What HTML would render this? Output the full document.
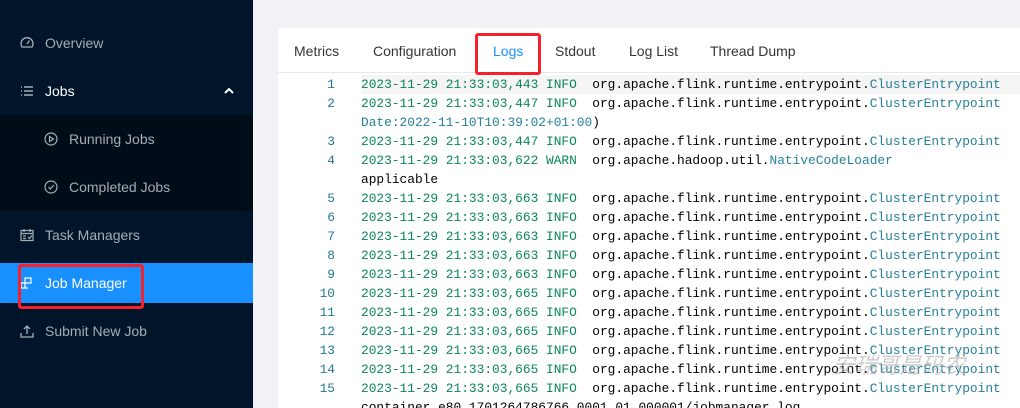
<!DOCTYPE html>
<html><head><meta charset="utf-8"><style>
*{margin:0;padding:0;box-sizing:border-box}
body{width:1020px;height:408px;overflow:hidden;background:#f0f2f5;font-family:"Liberation Sans",sans-serif;position:relative}
.sb{position:absolute;left:0;top:0;width:253px;height:408px;background:#001529}
.it{position:absolute;left:0;width:253px;height:40px;line-height:40px;color:#a6adb4;font-size:14px;padding-left:45px}
.it svg{position:absolute;left:20px;top:13px}
.sub{position:absolute;left:0;top:115px;width:253px;height:96px;background:#000c17}
.main{position:absolute;left:278px;top:28px;width:742px;height:380px;background:#fff;overflow:hidden}
.tabs{position:absolute;left:0;top:0;width:742px;height:45px;border-bottom:1px solid #e8e8e8}
.tab{position:absolute;top:15px;font-size:14px;color:#333}
.log{position:absolute;left:0;top:47px;width:742px;font-family:"Liberation Mono",monospace;font-size:12.85px;line-height:19px}
.r{height:19px;position:relative}
.n{position:absolute;left:0;width:57px;text-align:right;color:#237893}
.c{position:absolute;left:83px;color:#000;white-space:pre}
.t{color:#098658}.cl{color:#267f99}
.red{position:absolute;border:3px solid #f5222d;border-radius:3px}
</style></head><body>
<div class="sb">
<div class="it" style="top:23px"><svg width="14" height="14" viewBox="0 0 14 14" fill="none" stroke="#a6adb4" stroke-width="1.3"><path d="M2 11A6 6 0 1 1 12 11Z"/><path d="M7 8L9.5 4.5"/></svg>Overview</div>
<div class="it" style="top:71px;color:#fff"><svg width="14" height="14" viewBox="0 0 14 14" stroke="#a6adb4" stroke-width="1.4"><path d="M1 3h1M4 3h9M1 7h1M4 7h9M1 11h1M4 11h9"/></svg>Jobs<svg style="left:224px;top:16px" width="10" height="8" viewBox="0 0 10 8" fill="none" stroke="#fff" stroke-width="2"><path d="M1 6L5 2L9 6"/></svg></div>
<div class="sub"></div>
<div class="it" style="top:119px;padding-left:69px"><svg style="left:44px" width="14" height="14" viewBox="0 0 14 14" fill="none" stroke="#a6adb4" stroke-width="1.2"><circle cx="7" cy="7" r="6"/><path d="M5.5 4.5L9.5 7L5.5 9.5Z"/></svg>Running Jobs</div>
<div class="it" style="top:167px;padding-left:69px"><svg style="left:44px" width="14" height="14" viewBox="0 0 14 14" fill="none" stroke="#a6adb4" stroke-width="1.2"><circle cx="7" cy="7" r="6"/><path d="M4.5 7L6.3 9L9.8 5"/></svg>Completed Jobs</div>
<div class="it" style="top:215px"><svg width="14" height="14" viewBox="0 0 14 14" fill="none" stroke="#a6adb4" stroke-width="1.2"><rect x="1" y="2.5" width="12" height="10"/><path d="M4 1v3M10 1v3M1 5.5h12M3 8h3M3 10.5h3M8 9l1.5 1.5L12 7.5"/></svg>Task Managers</div>
<div class="it" style="top:263px;background:#1890ff;color:#fff"><svg width="14" height="14" viewBox="0 0 14 14" fill="none" stroke="#fff" stroke-width="1.2"><path d="M5 2h6v5H5zM1 7h4v5H1zM5 7v5h3"/></svg>Job Manager</div>
<div class="it" style="top:311px"><svg width="14" height="14" viewBox="0 0 14 14" fill="none" stroke="#a6adb4" stroke-width="1.3"><path d="M7 10V2M4 5l3-3 3 3M1 9v4h12V9"/></svg>Submit New Job</div>
<div class="red" style="left:18px;top:264px;width:126px;height:45px"></div>
</div>
<div class="main">
<div class="tabs">
<span class="tab" style="left:16px">Metrics</span>
<span class="tab" style="left:95px">Configuration</span>
<span class="tab" style="left:215px;color:#1890ff">Logs</span>
<span class="tab" style="left:277px">Stdout</span>
<span class="tab" style="left:351px">Log List</span>
<span class="tab" style="left:432px">Thread Dump</span>
</div>
<div class="log"><div class="r"><div style="position:absolute;left:83px;top:0;width:659px;height:19px;background:#f5f5f5"></div><span class="n">1</span><span class="c"><span class="t">2023-11-29 21:33:03,443 INFO </span> org.apache.flink.runtime.entrypoint.<span class="cl">ClusterEntrypoint</span></span></div><div class="r"><span class="n">2</span><span class="c"><span class="t">2023-11-29 21:33:03,447 INFO </span> org.apache.flink.runtime.entrypoint.<span class="cl">ClusterEntrypoint</span></span></div><div class="r"><span class="c"><span class="cl">Date:2022-11-10T10:39:02+01:00</span>)</span></div><div class="r"><span class="n">3</span><span class="c"><span class="t">2023-11-29 21:33:03,447 INFO </span> org.apache.flink.runtime.entrypoint.<span class="cl">ClusterEntrypoint</span></span></div><div class="r"><span class="n">4</span><span class="c"><span class="t">2023-11-29 21:33:03,622 WARN </span> org.apache.hadoop.util.<span class="cl">NativeCodeLoader</span></span></div><div class="r"><span class="c">applicable</span></div><div class="r"><span class="n">5</span><span class="c"><span class="t">2023-11-29 21:33:03,663 INFO </span> org.apache.flink.runtime.entrypoint.<span class="cl">ClusterEntrypoint</span></span></div><div class="r"><span class="n">6</span><span class="c"><span class="t">2023-11-29 21:33:03,663 INFO </span> org.apache.flink.runtime.entrypoint.<span class="cl">ClusterEntrypoint</span></span></div><div class="r"><span class="n">7</span><span class="c"><span class="t">2023-11-29 21:33:03,663 INFO </span> org.apache.flink.runtime.entrypoint.<span class="cl">ClusterEntrypoint</span></span></div><div class="r"><span class="n">8</span><span class="c"><span class="t">2023-11-29 21:33:03,663 INFO </span> org.apache.flink.runtime.entrypoint.<span class="cl">ClusterEntrypoint</span></span></div><div class="r"><span class="n">9</span><span class="c"><span class="t">2023-11-29 21:33:03,663 INFO </span> org.apache.flink.runtime.entrypoint.<span class="cl">ClusterEntrypoint</span></span></div><div class="r"><span class="n">10</span><span class="c"><span class="t">2023-11-29 21:33:03,665 INFO </span> org.apache.flink.runtime.entrypoint.<span class="cl">ClusterEntrypoint</span></span></div><div class="r"><span class="n">11</span><span class="c"><span class="t">2023-11-29 21:33:03,665 INFO </span> org.apache.flink.runtime.entrypoint.<span class="cl">ClusterEntrypoint</span></span></div><div class="r"><span class="n">12</span><span class="c"><span class="t">2023-11-29 21:33:03,665 INFO </span> org.apache.flink.runtime.entrypoint.<span class="cl">ClusterEntrypoint</span></span></div><div class="r"><span class="n">13</span><span class="c"><span class="t">2023-11-29 21:33:03,665 INFO </span> org.apache.flink.runtime.entrypoint.<span class="cl">ClusterEntrypoint</span></span></div><div class="r"><span class="n">14</span><span class="c"><span class="t">2023-11-29 21:33:03,665 INFO </span> org.apache.flink.runtime.entrypoint.<span class="cl">ClusterEntrypoint</span></span></div><div class="r"><span class="n">15</span><span class="c"><span class="t">2023-11-29 21:33:03,665 INFO </span> org.apache.flink.runtime.entrypoint.<span class="cl">ClusterEntrypoint</span></span></div><div class="r"><span class="c">container_e80_1701264786766_0001_01_000001/jobmanager.log</span></div></div>
<div class="red" style="left:197px;top:5px;width:66px;height:42px"></div>
<div style="position:absolute;left:555px;top:320px;font-family:'Noto Sans CJK SC',sans-serif;font-size:22px;color:rgba(170,170,170,0.6);font-style:italic">安瑞哥是码农</div>
</div>
</body></html>
